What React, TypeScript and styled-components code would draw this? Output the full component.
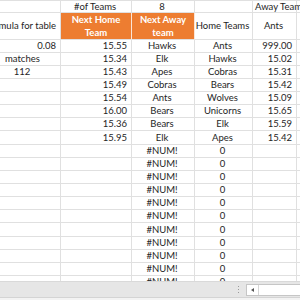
import React from "react";
import styled, { createGlobalStyle } from "styled-components";

const Global = createGlobalStyle`
  html, body { margin: 0; padding: 0; background: #fff; overflow: hidden; }
  body { width: 300px; height: 300px; font-family: Lato, "Liberation Sans", sans-serif; }
`;

const Screen = styled.div`
  width: 300px;
  height: 300px;
  display: flex;
  flex-direction: column;
  overflow: hidden;
  background: #fff;
`;

const SheetArea = styled.div`
  height: 281px;
  flex: none;
  overflow: hidden;
`;

const Grid = styled.div`
  display: grid;
  grid-template-columns: 75px 71px 63px 58px 44px 40px;
  grid-template-rows: 12px 26.5px;
  grid-auto-rows: 13.15px;
  margin-left: -14px;
  border-top: 1px solid #e0e0e0;
`;

type Align = "left" | "center" | "right";

const Cell = styled.div<{ $align?: Align; $indent?: number }>`
  box-sizing: border-box;
  border-right: 1px solid #e0e0e0;
  border-bottom: 1px solid #e0e0e0;
  display: flex;
  align-items: center;
  justify-content: ${(p) =>
    p.$align === "right" ? "flex-end" : p.$align === "center" ? "center" : "flex-start"};
  padding: 0 4px 0 ${(p) => (p.$indent ?? 2)}px;
  font-size: 9.5px;
  line-height: 12px;
  color: #1e1e1e;
  white-space: nowrap;
  min-width: 0;
`;

const HeadCell = styled(Cell)`
  background: #ed7d31;
  color: #fff;
  font-weight: 700;
  text-align: center;
  line-height: 13px;
  border-right-color: #fbe5d6;
  border-bottom-color: #e0e0e0;
  padding: 0 2px;
`;

const BottomBar = styled.div`
  box-sizing: border-box;
  height: 16px;
  flex: none;
  background: #e6e6e6;
  border-top: 1px solid #d9d9d9;
  display: flex;
  align-items: center;
  justify-content: flex-end;
  gap: 7px;
`;

const Grip = styled.div`
  display: flex;
  flex-direction: column;
  gap: 2px;
  span {
    width: 1px;
    height: 1px;
    background: #9a9a9a;
  }
`;

const ScrollBox = styled.div`
  box-sizing: border-box;
  width: 56px;
  height: 12px;
  margin-right: -2px;
  background: #fff;
  border: 1px solid #c6c6c6;
  display: flex;
`;

const ArrowBtn = styled.div`
  width: 11px;
  border-right: 1px solid #d6d6d6;
  display: flex;
  align-items: center;
  justify-content: center;
  &::before {
    content: "";
    border-top: 2.5px solid transparent;
    border-bottom: 2.5px solid transparent;
    border-right: 3px solid #555;
  }
`;

const Footer = styled.div`
  flex: 1;
  background: #f3f3f3;
  border-top: 1px solid #d4d4d4;
`;

type Row = [string, string, string, string, string];

const rows: Row[] = [
  ["0.08", "15.55", "Hawks", "Ants", "999.00"],
  ["matches", "15.34", "Elk", "Hawks", "15.02"],
  ["112", "15.43", "Apes", "Cobras", "15.31"],
  ["", "15.49", "Cobras", "Bears", "15.42"],
  ["", "15.54", "Ants", "Wolves", "15.09"],
  ["", "16.00", "Bears", "Unicorns", "15.65"],
  ["", "15.36", "Bears", "Elk", "15.59"],
  ["", "15.95", "Elk", "Apes", "15.42"],
];

for (let i = 0; i < 11; i++) rows.push(["", "", "#NUM!", "0", ""]);

const colAAlign: Align[] = ["right", "left", "center"];

export default function App() {
  return (
    <>
      <Global />
      <Screen>
        <SheetArea>
          <Grid>
            <Cell />
            <Cell $align="center">#of Teams</Cell>
            <Cell $align="center">8</Cell>
            <Cell />
            <Cell>Away Teams</Cell>
            <Cell />

            <Cell $align="right">Formula for table</Cell>
            <HeadCell $align="center">
              Next Home
              <br />
              Team
            </HeadCell>
            <HeadCell $align="center">
              Next Away
              <br />
              team
            </HeadCell>
            <Cell $align="center">Home Teams</Cell>
            <Cell $align="center">Ants</Cell>
            <Cell />

            {rows.map((r, i) => (
              <React.Fragment key={i}>
                <Cell $align={colAAlign[i] ?? "left"} $indent={i === 1 ? 19 : 2}>
                  {r[0]}
                </Cell>
                <Cell $align="right">{r[1]}</Cell>
                <Cell $align="center">{r[2]}</Cell>
                <Cell $align="center">{r[3]}</Cell>
                <Cell $align="right">{r[4]}</Cell>
                <Cell />
              </React.Fragment>
            ))}
          </Grid>
        </SheetArea>
        <BottomBar>
          <Grip>
            <span />
            <span />
            <span />
          </Grip>
          <ScrollBox>
            <ArrowBtn />
          </ScrollBox>
        </BottomBar>
        <Footer />
      </Screen>
    </>
  );
}
